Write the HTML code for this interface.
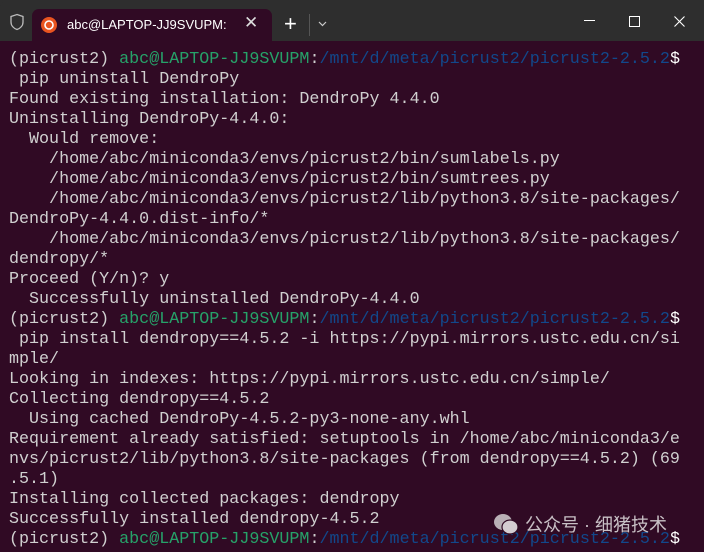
<!DOCTYPE html>
<html><head><style>
body{margin:0;width:704px;height:552px;overflow:hidden;background:#2e2e2e;font-family:"Liberation Sans",sans-serif;position:relative}
.top{position:absolute;left:0;top:0;width:704px;height:41px;background:#2e2e2e;border-radius:8px 8px 0 0}
.tab{position:absolute;left:32px;top:9px;width:240px;height:33px;background:#300a24;border-radius:7px 7px 0 0}
.term{position:absolute;left:0;top:41px;width:704px;height:511px;background:#300a24}
pre{margin:0;position:absolute;left:9px;top:50px;font-family:"Liberation Mono",monospace;font-size:16.7px;line-height:20px;color:#d0d0d0}
.g{color:#26a269}.b{color:#12488b}.w{color:#fff}
.t{position:absolute;color:#fff;font-size:13px}
</style></head><body>
<div class="top"></div>
<svg style="position:absolute;left:9px;top:13px" width="16" height="18" viewBox="0 0 16 18"><path d="M8 1.5 L14 3.5 V9 C14 13 11 15.5 8 16.5 C5 15.5 2 13 2 9 V3.5 Z" fill="none" stroke="#bbb" stroke-width="1.3"/></svg>
<div class="tab"></div>
<svg style="position:absolute;left:41px;top:17px" width="16" height="16"><circle cx="8" cy="8" r="8" fill="#e95420"/><circle cx="8" cy="8" r="4" fill="none" stroke="#fff" stroke-width="1.6"/></svg>
<div class="t" style="left:67px;top:17px;width:193px;overflow:hidden;white-space:nowrap">abc@LAPTOP-JJ9SVUPM:</div>
<div class="t" style="left:244px;top:13px;font-size:17px;color:#ddd">✕</div>
<div class="t" style="left:284px;top:11px;font-size:22px;font-weight:300">+</div>
<div style="position:absolute;left:309px;top:14px;width:1px;height:22px;background:#555"></div>
<svg style="position:absolute;left:318px;top:21px" width="9" height="6"><path d="M1 1 L4.5 4.5 L8 1" fill="none" stroke="#ccc" stroke-width="1.2"/></svg>
<div style="position:absolute;left:584px;top:20px;width:11px;height:1px;background:#fff"></div>
<div style="position:absolute;left:629px;top:16px;width:9px;height:9px;border:1px solid #fff"></div>
<svg style="position:absolute;left:674px;top:16px" width="11" height="11"><path d="M0.5 0.5 L10.5 10.5 M10.5 0.5 L0.5 10.5" stroke="#fff" stroke-width="1.1"/></svg>
<div class="term"></div>
<pre>(picrust2) <span class="g">abc@LAPTOP-JJ9SVUPM</span>:<span class="b">/mnt/d/meta/picrust2/picrust2-2.5.2</span><span class="w">$</span>
 pip uninstall DendroPy
Found existing installation: DendroPy 4.4.0
Uninstalling DendroPy-4.4.0:
  Would remove:
    /home/abc/miniconda3/envs/picrust2/bin/sumlabels.py
    /home/abc/miniconda3/envs/picrust2/bin/sumtrees.py
    /home/abc/miniconda3/envs/picrust2/lib/python3.8/site-packages/
DendroPy-4.4.0.dist-info/*
    /home/abc/miniconda3/envs/picrust2/lib/python3.8/site-packages/
dendropy/*
Proceed (Y/n)? y
  Successfully uninstalled DendroPy-4.4.0
(picrust2) <span class="g">abc@LAPTOP-JJ9SVUPM</span>:<span class="b">/mnt/d/meta/picrust2/picrust2-2.5.2</span><span class="w">$</span>
 pip install dendropy==4.5.2 -i https://pypi.mirrors.ustc.edu.cn/si
mple/
Looking in indexes: https://pypi.mirrors.ustc.edu.cn/simple/
Collecting dendropy==4.5.2
  Using cached DendroPy-4.5.2-py3-none-any.whl
Requirement already satisfied: setuptools in /home/abc/miniconda3/e
nvs/picrust2/lib/python3.8/site-packages (from dendropy==4.5.2) (69
.5.1)
Installing collected packages: dendropy
Successfully installed dendropy-4.5.2
(picrust2) <span class="g">abc@LAPTOP-JJ9SVUPM</span>:<span class="b">/mnt/d/meta/picrust2/picrust2-2.5.2</span><span class="w">$</span></pre>
<svg style="position:absolute;left:492px;top:512px" width="28" height="24"><ellipse cx="11" cy="10" rx="9" ry="8" fill="#b9b0b6"/><ellipse cx="18" cy="15" rx="8" ry="7" fill="#d4ccd1" stroke="#300a24" stroke-width="1.2"/></svg>
<div style="position:absolute;left:525px;top:511px;font-family:'Liberation Sans','Noto Sans CJK SC',sans-serif;font-size:18px;color:#c8c0c5">公众号 · 细猪技术</div>
</body></html>
